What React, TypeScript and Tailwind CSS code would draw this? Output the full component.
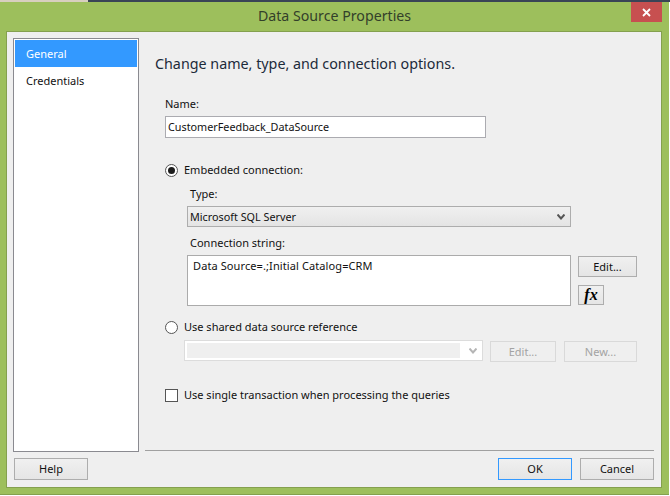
const btn =
  "flex items-center justify-center border border-[#adadad] bg-gradient-to-b from-[#f0f0f0] to-[#e5e5e5] text-[#111]";
const btnOff = "flex items-center justify-center border border-[#d9d9d9] bg-[#efefef] text-[#a3a3a3]";

function Chevron({ color }: { color: string }) {
  return (
    <svg width="8" height="6" viewBox="0 0 8 6">
      <path d="M0.5 0.5 L4 4.5 L7.5 0.5" fill="none" stroke={color} strokeWidth="2" />
    </svg>
  );
}

function Radio({ checked }: { checked?: boolean }) {
  return (
    <span className="flex h-[13px] w-[13px] items-center justify-center rounded-full border border-[#555] bg-white">
      {checked && <span className="h-[7px] w-[7px] rounded-full bg-[#1c1c1c]" />}
    </span>
  );
}

export default function App() {
  return (
    <div className="flex h-[496px] w-[670px] flex-col overflow-hidden bg-white font-['Noto_Sans',sans-serif] text-[11px] leading-[14px] text-[#111]">
      <div className="flex h-[2px] shrink-0 bg-[#3a4456]">
        <div className="w-[88px] bg-[#d8cfc0]" />
      </div>
      <div className="flex h-[493px] w-[669px] shrink-0 flex-col border-b border-[#84a04e] bg-[#9dbf5c]">
        <div className="relative flex h-[29px] shrink-0 items-center justify-center pb-[2px] text-[14.2px] text-[#33402a]">
          Data Source Properties
          <div className="absolute right-[7px] top-0 flex h-[20px] w-[31px] items-center justify-center bg-[#c75050]">
            <svg width="9" height="9" viewBox="0 0 9 9">
              <path d="M1 1 L8 8 M8 1 L1 8" stroke="#fff" strokeWidth="1.8" />
            </svg>
          </div>
        </div>

        <div className="ml-[6px] flex h-[457px] w-[656px] flex-col border border-[#84a04e] bg-[#efefef]">
          <div className="flex h-[420px] shrink-0">
            <div className="ml-[6px] mt-[6px] h-[414px] w-[126px] shrink-0 border border-[#8a8a90] bg-white p-[1px]">
              <div className="flex h-[27px] items-center bg-[#3399ff] pl-[11px] text-white">General</div>
              <div className="flex h-[27px] items-center pl-[11px]">Credentials</div>
            </div>

            <div className="flex min-w-0 flex-1 flex-col pl-[16px] pr-[24px]">
              <div className="mt-[22px] h-[20px] text-[14.3px] leading-[20px] text-[#1c2a3a]">
                Change name, type, and connection options.
              </div>

              <div className="ml-[10px]">
                <div className="mt-[23px] h-[14px]">Name:</div>
                <div className="mt-[5px] flex h-[22px] w-[321px] items-center border border-[#ababb0] bg-white pl-[2px] text-[10.8px]">
                  CustomerFeedback_DataSource
                </div>

                <div className="mt-[25px] flex h-[14px] items-center gap-[6px]">
                  <Radio checked />
                  Embedded connection:
                </div>

                <div className="ml-[22px]">
                  <div className="ml-[3px] mt-[10px] h-[14px]">Type:</div>
                  <div className="mt-[5px] flex h-[21px] w-[384px] items-center justify-between border border-[#adadad] bg-gradient-to-b from-[#f0f0f0] to-[#e4e4e4] pl-[2px] pr-[5px] text-[10.8px]">
                    Microsoft SQL Server
                    <Chevron color="#555" />
                  </div>
                  <div className="ml-[3px] mt-[9px] h-[14px]">Connection string:</div>
                  <div className="mt-[5px] flex items-start gap-[7px]">
                    <div className="h-[51px] w-[384px] border border-[#ababab] bg-white pl-[5px] pt-[3px] tracking-[0.1px]">
                      Data Source=.;Initial Catalog=CRM
                    </div>
                    <div className="flex flex-col items-start pt-[1px]">
                      <div className={`${btn} h-[21px] w-[59px]`}>Edit...</div>
                      <div className={`${btn} mt-[8px] h-[20px] w-[26px] font-['Liberation_Serif',serif] text-[16px] font-bold italic text-black`}>
                        fx
                      </div>
                    </div>
                  </div>
                </div>

                <div className="mt-[14px] flex h-[14px] items-center gap-[6px]">
                  <Radio />
                  Use shared data source reference
                </div>

                <div className="ml-[19px] mt-[6px] flex items-start gap-[7px]">
                  <div className="flex h-[21px] w-[299px] items-center border border-[#dcdcdc] bg-white p-[2px] pr-[5px]">
                    <div className="h-full flex-1 bg-[#efefef]" />
                    <div className="ml-[9px]">
                      <Chevron color="#b5b5b5" />
                    </div>
                  </div>
                  <div className={`${btnOff} mt-[1px] h-[21px] w-[66px]`}>Edit...</div>
                  <div className={`${btnOff} ml-[1px] mt-[1px] h-[21px] w-[73px]`}>New...</div>
                </div>

                <div className="mt-[26px] flex h-[14px] items-center gap-[6px]">
                  <span className="h-[13px] w-[13px] border border-[#555] bg-white" />
                  Use single transaction when processing the queries
                </div>
              </div>
            </div>
          </div>

          <div className="ml-[138px] mr-[7px] mt-[-2px] h-[1px] shrink-0 bg-[#a0a0a0]" />

          <div className="ml-[7px] mr-[7px] mt-[7px] flex items-center justify-between">
            <div className={`${btn} h-[22px] w-[74px]`}>Help</div>
            <div className="flex gap-[8px]">
              <div className="flex h-[22px] w-[74px] items-center justify-center border border-[#3399ff] bg-gradient-to-b from-[#f0f0f0] to-[#e5e5e5]">
                OK
              </div>
              <div className={`${btn} h-[22px] w-[74px]`}>Cancel</div>
            </div>
          </div>
        </div>
      </div>
    </div>
  );
}
